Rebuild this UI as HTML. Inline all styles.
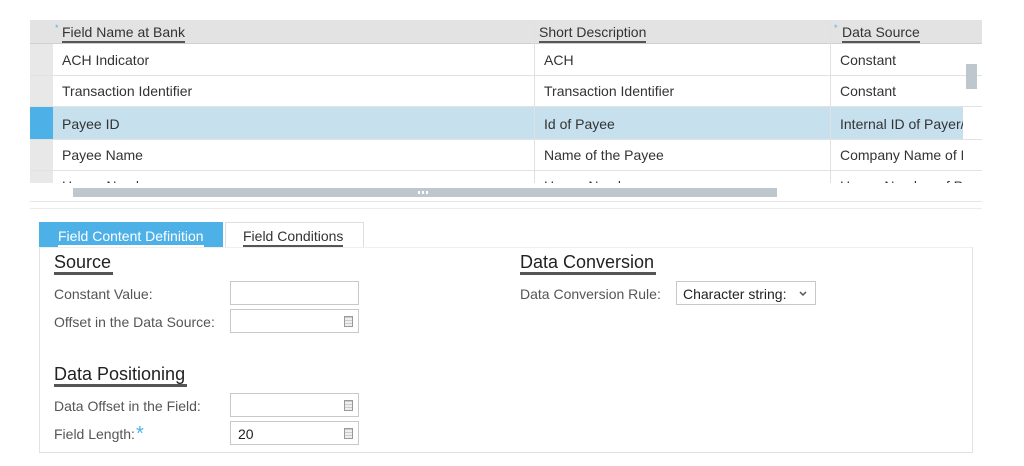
<!DOCTYPE html>
<html><head><style>
*{margin:0;padding:0;box-sizing:border-box}
body{width:1024px;height:466px;background:#fff;font-family:"Liberation Sans",Arial,sans-serif;color:#333;position:relative;overflow:hidden}
.a{position:absolute}
.t{font-size:14px;color:#333;white-space:nowrap}
.u{border-bottom:2px solid #555;padding-bottom:1px}
.inp{position:absolute;width:129px;height:24px;border:1px solid #c8c8c8;background:#fff}
.cal{position:absolute;right:5px;top:6px;width:9px;height:11px;border:1px solid #999;background:repeating-linear-gradient(#ccc 0 1px,#eee 1px 3px)}
.lbl{position:absolute;font-size:14px;color:#555;white-space:nowrap}
.h{position:absolute;font-size:18px;color:#222;border-bottom:3px solid #555;line-height:20px;padding-right:2px;white-space:nowrap}
</style></head><body>
<!-- table -->
<div class="a" style="left:30px;top:20px;width:952px;height:24px;background:#e3e3e3;border-bottom:1px solid #d0d0d0"></div>
<div class="a" style="left:30px;top:44px;width:23px;height:140px;background:#e8e8e8"></div>
<div class="a" style="left:30px;top:107px;width:23px;height:32px;background:#4db1e8"></div>
<div class="a" style="left:53px;top:107px;width:910px;height:32px;background:#c6e0ee"></div>
<div class="a" style="left:30px;top:75px;width:952px;height:1px;background:#e2e2e2"></div>
<div class="a" style="left:30px;top:106px;width:952px;height:1px;background:#e2e2e2"></div>
<div class="a" style="left:30px;top:139px;width:952px;height:1px;background:#e2e2e2"></div>
<div class="a" style="left:30px;top:170px;width:952px;height:1px;background:#e2e2e2"></div>
<div class="a" style="left:534px;top:20px;width:1px;height:163px;background:#e0e0e0"></div>
<div class="a" style="left:830px;top:20px;width:1px;height:163px;background:#e0e0e0"></div>
<div class="a t" style="left:55px;top:23px;color:#5ab4e5;font-size:9px">*</div>
<div class="a t u" style="left:62px;top:24px">Field Name at Bank</div>
<div class="a t u" style="left:539px;top:24px">Short Description</div>
<div class="a t" style="left:834px;top:23px;color:#5ab4e5;font-size:9px">*</div>
<div class="a t u" style="left:842px;top:24px">Data Source</div>
<div class="a t" style="left:62px;top:52px">ACH Indicator</div>
<div class="a t" style="left:544px;top:52px">ACH</div>
<div class="a t" style="left:840px;top:52px">Constant</div>
<div class="a t" style="left:62px;top:83px">Transaction Identifier</div>
<div class="a t" style="left:544px;top:83px">Transaction Identifier</div>
<div class="a t" style="left:840px;top:83px">Constant</div>
<div class="a t" style="left:62px;top:116px">Payee ID</div>
<div class="a t" style="left:544px;top:116px">Id of Payee</div>
<div class="a t" style="left:840px;top:116px;width:123px;overflow:hidden">Internal ID of Payer/Payee</div>
<div class="a t" style="left:62px;top:147px">Payee Name</div>
<div class="a t" style="left:544px;top:147px">Name of the Payee</div>
<div class="a t" style="left:840px;top:147px;width:123px;overflow:hidden">Company Name of Payee</div>
<div class="a t" style="left:62px;top:178px">House Number</div>
<div class="a t" style="left:544px;top:178px">House Number</div>
<div class="a t" style="left:840px;top:178px;width:123px;overflow:hidden">House Number of Payee</div>
<div class="a" style="left:30px;top:183px;width:952px;height:18px;background:#fff"></div>
<div class="a" style="left:966px;top:64px;width:11px;height:25px;background:#bfc7ce"></div>
<div class="a" style="left:73px;top:188px;width:704px;height:9px;background:#bfc7ce"></div>
<div class="a" style="left:418px;top:191px;width:12px;height:3px;background:repeating-linear-gradient(90deg,#fff 0 2px,transparent 2px 4px)"></div>
<div class="a" style="left:30px;top:201px;width:952px;height:1px;background:#e6e6e6"></div>
<div class="a" style="left:30px;top:208px;width:952px;height:1px;background:#ececec"></div>
<!-- tabs -->
<div class="a" style="left:39px;top:222px;width:184px;height:26px;background:#4db1e8"></div>
<div class="a" style="left:58px;top:228px;font-size:14px;color:#fff;border-bottom:2px solid #fff;padding-bottom:1px;white-space:nowrap">Field Content Definition</div>
<div class="a" style="left:225px;top:222px;width:139px;height:26px;border:1px solid #ddd;border-bottom:none;background:#fff"></div>
<div class="a" style="left:243px;top:228px;font-size:14px;color:#333;border-bottom:2px solid #555;padding-bottom:1px;white-space:nowrap">Field Conditions</div>
<div class="a" style="left:39px;top:247px;width:934px;height:206px;border:1px solid #e2e2e2;border-top:1px solid #eee"></div>
<!-- form -->
<div class="h" style="left:54px;top:252px">Source</div>
<div class="lbl" style="left:54px;top:286px">Constant Value:</div>
<div class="inp" style="left:230px;top:281px"></div>
<div class="lbl" style="left:54px;top:314px">Offset in the Data Source:</div>
<div class="inp" style="left:230px;top:309px"><div class="cal"></div></div>
<div class="h" style="left:54px;top:364px">Data Positioning</div>
<div class="lbl" style="left:54px;top:398px">Data Offset in the Field:</div>
<div class="inp" style="left:230px;top:393px"><div class="cal"></div></div>
<div class="lbl" style="left:54px;top:426px">Field Length:<span style="color:#4db1e8;font-size:20px;position:absolute;left:82px;top:-3px">*</span></div>
<div class="inp" style="left:230px;top:421px"><span style="position:absolute;left:7px;top:4px;font-size:14px;color:#222">20</span><div class="cal"></div></div>
<div class="h" style="left:520px;top:252px">Data Conversion</div>
<div class="lbl" style="left:520px;top:286px">Data Conversion Rule:</div>
<div class="inp" style="left:676px;top:281px;width:140px"><span style="position:absolute;left:6px;top:4px;font-size:14px;color:#222">Character string:</span><svg style="position:absolute;left:122px;top:9px" width="8" height="6"><path d="M1 1L4 4L7 1" stroke="#555" stroke-width="1.5" fill="none"/></svg></div>
</body></html>
